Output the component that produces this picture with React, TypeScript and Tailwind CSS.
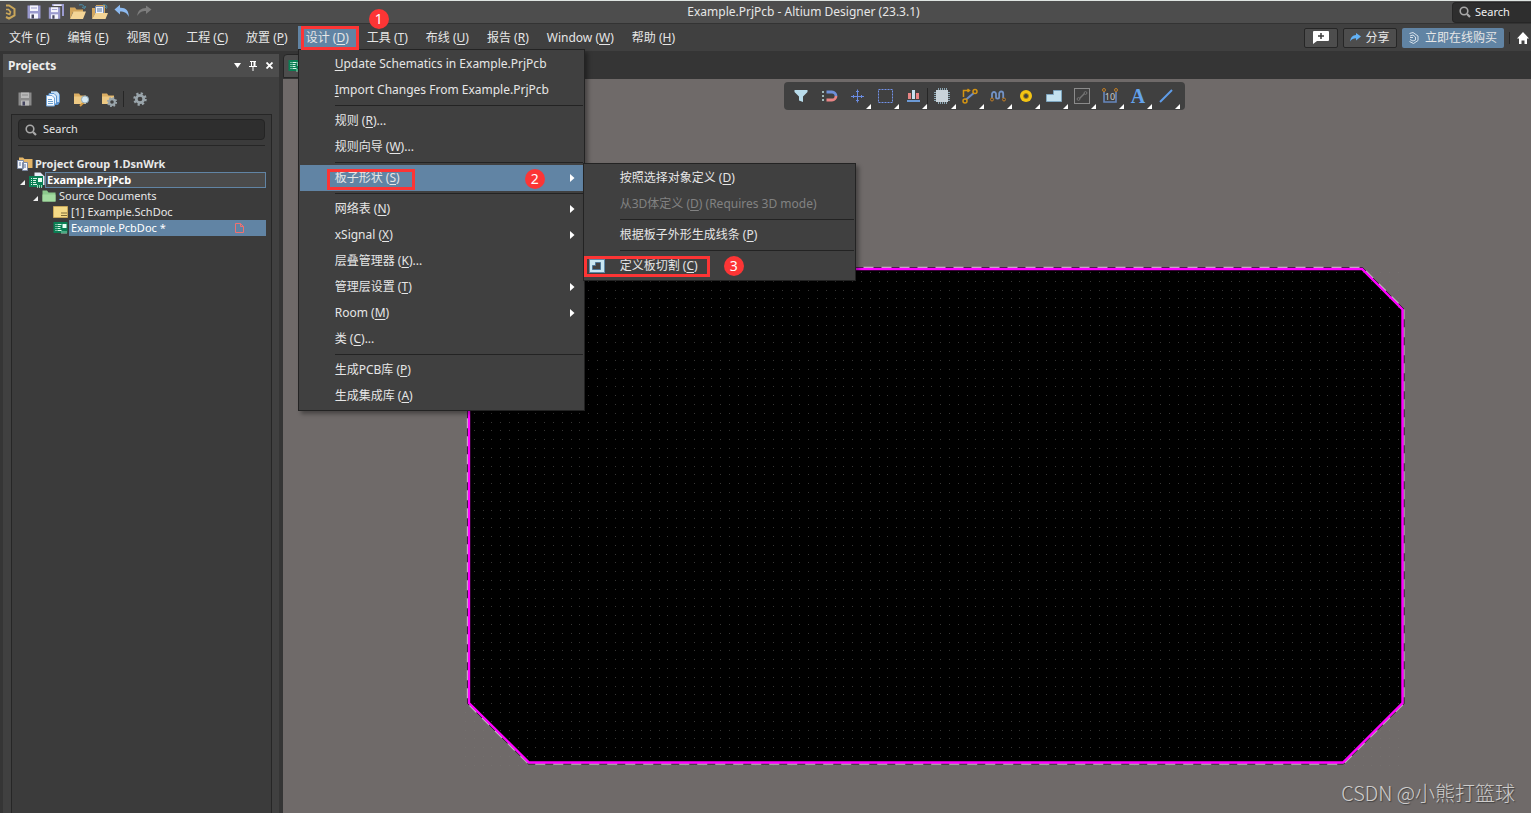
import React from 'react';
import clsx from 'clsx';

interface MenuEntry {
  label?: string;
  arrow?: boolean;
  disabled?: boolean;
  separator?: boolean;
  active?: boolean;
  mark?: string;
  icon?: React.ReactNode;
  submenu?: MenuEntry[];
}

const boardCutoutIcon = (
  <svg width="16" height="14" viewBox="0 0 16 14">
    <rect width="16" height="14" fill="#5f88a8" />
    <rect x="1" y="1" width="14" height="12" fill="#c9e6f1" />
    <path d="M6.500 3.500h5v7h-8v-4h3z" fill="#404040" stroke="#4f7797" />
  </svg>
);

const topMenus = [
  '文件 (&F)', '编辑 (&E)', '视图 (&V)', '工程 (&C)', '放置 (&P)', '设计 (&D)',
  '工具 (&T)', '布线 (&U)', '报告 (&R)', 'Window (&W)', '帮助 (&H)',
];

const boardShapeMenu: MenuEntry[] = [
  { label: '按照选择对象定义 (&D)' },
  { label: '从3D体定义 (&D) (Requires 3D mode)', disabled: true },
  { separator: true },
  { label: '根据板子外形生成线条 (&P)' },
  { separator: true },
  { label: '定义板切割 (&C)', icon: boardCutoutIcon, mark: '3' },
];

const designMenu: MenuEntry[] = [
  { label: '&Update Schematics in Example.PrjPcb' },
  { label: '&Import Changes From Example.PrjPcb' },
  { separator: true },
  { label: '规则 (&R)...' },
  { label: '规则向导 (&W)...' },
  { separator: true },
  { label: '板子形状 (&S)', arrow: true, active: true, mark: '2', submenu: boardShapeMenu },
  { separator: true },
  { label: '网络表 (&N)', arrow: true },
  { label: 'xSignal (&X)', arrow: true },
  { label: '层叠管理器 (&K)...' },
  { label: '管理层设置 (&T)', arrow: true },
  { label: 'Room (&M)', arrow: true },
  { label: '类 (&C)...' },
  { separator: true },
  { label: '生成PCB库 (&P)' },
  { label: '生成集成库 (&A)' },
];

// The letter after "&" is the access key and gets underlined
const MenuLabel: React.FC<{ text: string }> = ({ text }) => {
  const at = text.indexOf('&');
  if (at < 0) return <>{text}</>;
  return (
    <>
      {text.slice(0, at)}
      <span className="underline underline-offset-2">{text[at + 1]}</span>
      {text.slice(at + 2)}
    </>
  );
};

const StepBadge: React.FC<{ n: string; className?: string }> = ({ n, className }) => (
  <span
    className={clsx(
      'absolute z-30 flex h-5 w-5 items-center justify-center rounded-full bg-[#fc3535] text-sm leading-5 text-white',
      className,
    )}
  >
    {n}
  </span>
);

const MenuPanel: React.FC<{ entries: MenuEntry[]; className?: string }> = ({ entries, className }) => (
  <ul className={clsx('absolute z-20 border border-[#232323] bg-[#404040] p-px shadow-[3px_3px_4px_rgba(0,0,0,0.35)]', className)}>
    {entries.map((entry, i) =>
      entry.separator ? (
        <li key={i} className="ml-[35px] h-[5px] pt-[2px]">
          <div className="h-px bg-[#232323]"></div>
        </li>
      ) : (
        <li key={i} className="relative">
          <button
            type="button"
            disabled={entry.disabled}
            className={clsx(
              'flex h-[26px] w-full items-center pr-2 text-left whitespace-nowrap',
              entry.active && 'bg-[#6184a4]',
              entry.disabled ? 'text-[#828282]' : 'text-[#e6e6e6]',
            )}
          >
            <span className="flex w-[35px] shrink-0 pl-1">{entry.icon}</span>
            <span className="flex-1">
              <MenuLabel text={entry.label ?? ''} />
            </span>
            {entry.arrow && (
              <svg width="5" height="8" viewBox="0 0 5 8">
                <path d="M0 0l4.500 4L0 8z" fill="#fff" />
              </svg>
            )}
          </button>
          {entry.mark === '2' && (
            <>
              <span className="absolute top-1 left-[27px] h-[21px] w-[88px] border-3 border-[#fc3535]"></span>
              <StepBadge n="2" className="top-1 left-[225px]" />
            </>
          )}
          {entry.mark === '3' && (
            <>
              <span className="absolute top-[3px] -left-px h-[21px] w-[126px] border-3 border-[#fc3535]"></span>
              <StepBadge n="3" className="top-[3px] left-[139px]" />
            </>
          )}
          {entry.submenu && <MenuPanel entries={entry.submenu} className="-top-[2px] left-full w-[273px]" />}
        </li>
      ),
    )}
  </ul>
);

const SearchIcon = () => (
  <svg width="12" height="12" viewBox="0 0 12 12" fill="none" stroke="#a8a8a8" className="shrink-0">
    <circle cx="5" cy="5" r="3.800" strokeWidth="1.600" />
    <path d="M8 8l3 3" strokeWidth="2.200" />
  </svg>
);

const Floppy: React.FC<{ body: string; inner: string }> = ({ body, inner }) => (
  <>
    <path d="M1.500 1.500h13v13h-13z" fill={body} />
    <rect x="4" y="1.500" width="8" height="5.500" fill={inner} />
    <rect x="5" y="3.500" width="6" height="1" fill={body} />
    <rect x="4" y="9.500" width="8" height="5" fill={inner} />
    <rect x="5.500" y="10.500" width="2.500" height="4" fill="#454560" />
  </>
);

const Folder = () => (
  <>
    <path d="M1 13V2.500h5l1.500 2H13V13z" fill="#dcae62" />
    <path d="M1 13V5.500h12V13z" fill="#edc983" />
  </>
);

const quickActions: { name: string; icon: React.ReactNode }[] = [
  { name: 'Save', icon: <Floppy body="#9a9ace" inner="#f4f4fb" /> },
  {
    name: 'Save All',
    icon: (
      <>
        <path d="M4 0h12v12h-2V2H4z" fill="#9a9ace" />
        <path d="M5.500 0.500h8v1.500h-8z" fill="#f4f4fb" />
        <g transform="translate(-.5 2) scale(.88)"><Floppy body="#9a9ace" inner="#f4f4fb" /></g>
      </>
    ),
  },
  {
    name: 'Open',
    icon: (
      <>
        <path d="M0 15V3.500h5L6.500 5.500H13V8H3z" fill="#d3a65c" />
        <path d="M3.500 7.500H16l-3 7.500H0z" fill="#f4d596" />
        <path d="M9 1c3-.8 5 0 5.500 2.500M12 3l2.500 1.500L16 2" stroke="#4b91ad" fill="none" />
      </>
    ),
  },
  {
    name: 'Open Project',
    icon: (
      <>
        <path d="M0 15V4h4V1h9v9H3z" fill="#d3a65c" />
        <path d="M3.500 2.500h8v8h-8z" fill="#eef3fa" stroke="#7891bd" />
        <path d="M5 5h5M5 7h5" stroke="#53719f" />
        <path d="M3.500 9H16l-2.500 6H0z" fill="#f4d596" />
        <path d="M11 1c2-.8 4 .2 4 2.500M13 3l2 1.500" stroke="#4b91ad" fill="none" />
      </>
    ),
  },
  {
    name: 'Undo',
    icon: <path d="M.5 5.500L6 .8v3c5.500-.3 9 2.700 8.800 9.200C13.300 9 10.500 7.500 6 7.500v3z" fill="#8dbaf0" />,
  },
  {
    name: 'Redo',
    icon: <path d="M15.500 5.500L10 1.500v2.600c-5 .2-8.300 2.500-8.800 7.900C3.500 8.300 6 7 10 7v3z" fill="#7d7d7d" />,
  },
];

const Gear: React.FC<{ cx: number; cy: number; r: number; fill: string; hole: string }> = ({ cx, cy, r, fill, hole }) => (
  <>
    <circle cx={cx} cy={cy} r={r} fill="none" stroke={fill} strokeWidth={r * 0.45} strokeDasharray={`${r * 0.393} ${r * 0.392}`} />
    <circle cx={cx} cy={cy} r={r * 0.68} fill={hole} stroke={fill} strokeWidth={r * 0.5} />
  </>
);

const panelActions: { name: string; icon: React.ReactNode }[] = [
  { name: 'Save', icon: <Floppy body="#8b8b8b" inner="#b9b9b9" /> },
  {
    name: 'Compile',
    icon: (
      <>
        <path d="M6 .5h6l3 3V11l-2 3H6z" fill="#5b94d0" />
        <path d="M6 .5h6l2 2V11H6z" fill="#c6def4" />
        <path d="M4 2.500h5l2.500 2.500v8H4z" fill="#e3effb" stroke="#5b94d0" />
        <path d="M1.500 4.500H7l2.500 2.500v8h-8z" fill="#f5faff" stroke="#6fa2d8" />
        <path d="M3 8.500h4M3 10.500h5M3 12.500h5" stroke="#6c9fce" />
      </>
    ),
  },
  {
    name: 'Explore',
    icon: (
      <>
        <Folder />
        <path d="M11 11l-4 4" stroke="#d49a43" strokeWidth="2" />
        <circle cx="12" cy="8.500" r="3.600" fill="#d5e8f2" stroke="#8fa9b8" />
      </>
    ),
  },
  {
    name: 'Project Options',
    icon: (
      <>
        <Folder />
        <Gear cx={11} cy={11} r={4.2} fill="#9aa5ab" hole="#404040" />
      </>
    ),
  },
];

const activeTools: { name: string; menu: boolean; icon: React.ReactNode }[] = [
  {
    name: 'Filter',
    menu: false,
    icon: <path d="M1.500 2h13v2L10 8.500V14l-4-1.500v-4L1.500 4z" fill="#b9dceb" />,
  },
  {
    name: 'Snap',
    menu: false,
    icon: (
      <>
        <path d="M5.500 4H11a4 4 0 0 1 4 4" fill="none" stroke="#6e8fd8" strokeWidth="2.800" />
        <path d="M15 8a4 4 0 0 1-4 4H5.500" fill="none" stroke="#e88484" strokeWidth="2.800" />
        <path d="M1 3h2v2H1zM1 7h2v2H1zM1 11h2v2H1z" fill="#9fb8b8" />
      </>
    ),
  },
  { name: 'Move', menu: true, icon: <path d="M8.500 1.500v13M2 8.500h13M7 3.500h3M7 12.500h3M4.500 7v3M12.500 7v3" stroke="#6a8be0" /> },
  { name: 'Select', menu: true, icon: <rect x="1.500" y="1.500" width="14" height="13" fill="none" stroke="#7292ea" strokeDasharray="2 1" /> },
  {
    name: 'Align',
    menu: true,
    icon: (
      <>
        <rect x="3" y="5" width="3" height="6" fill="#e88484" />
        <rect x="7" y="2" width="3" height="9" fill="#c5e2ef" />
        <rect x="11" y="5" width="3" height="6" fill="#e88484" />
        <rect x="2" y="12" width="13" height="2" fill="#6c9ad6" />
      </>
    ),
  },
  {
    name: 'Component',
    menu: true,
    icon: (
      <>
        <path d="M4.500 0v16M6.500 0v16M8.500 0v16M10.500 0v16M12.500 0v16M0 4.500h16M0 6.500h16M0 8.500h16M0 10.500h16M0 12.500h16" stroke="#8ca6b3" />
        <rect x="2" y="2" width="12" height="12" fill="#c9d3d9" />
      </>
    ),
  },
  {
    name: 'Route',
    menu: true,
    icon: (
      <>
        <path d="M3.500 12L13 4" stroke="#6b8cc4" strokeWidth="2" />
        <path d="M1.500 9V2.500H7M5.500 1L7.500 2.500L5.500 4" fill="none" stroke="#d49412" strokeWidth="1.500" />
        <circle cx="13" cy="3.500" r="2" fill="#404040" stroke="#d49412" strokeWidth="1.500" />
        <circle cx="3" cy="13" r="2" fill="#404040" stroke="#d49412" strokeWidth="1.500" />
      </>
    ),
  },
  {
    name: 'Tune',
    menu: true,
    icon: (
      <>
        <path d="M2 10V6a2 2 0 0 1 4 0v3a1.600 1.600 0 0 0 3.200 0V5.500a2 2 0 0 1 4 0V10" fill="none" stroke="#7292c6" strokeWidth="1.800" />
        <circle cx="2" cy="11.500" r="1.500" fill="#404040" stroke="#c27e24" />
        <circle cx="14" cy="11.500" r="1.500" fill="#404040" stroke="#c27e24" />
      </>
    ),
  },
  {
    name: 'Via',
    menu: true,
    icon: (
      <>
        <circle cx="8" cy="8" r="6" fill="#f3c414" />
        <circle cx="8" cy="8" r="2.500" fill="#404040" stroke="#b08b12" />
      </>
    ),
  },
  { name: 'Polygon', menu: true, icon: <path d="M.5 13.500v-7h7v-4h8v11z" fill="#c4e2ef" stroke="#7ea6c0" /> },
  {
    name: 'Cutout',
    menu: true,
    icon: (
      <>
        <rect x=".5" y=".5" width="15" height="15" fill="none" stroke="#8a8a8a" />
        <path d="M4.500 11.500L11.500 4.500" stroke="#757575" strokeWidth="1.500" />
        <circle cx="4.500" cy="11" r="1.400" fill="#404040" stroke="#757575" />
        <circle cx="11.500" cy="5" r="1.400" fill="#404040" stroke="#757575" />
      </>
    ),
  },
  {
    name: 'Dimension',
    menu: true,
    icon: (
      <>
        <path d="M2 3.500V14h12V3.500" fill="none" stroke="#6687bd" strokeWidth="1.600" />
        <circle cx="2" cy="2" r="1.500" fill="#404040" stroke="#c27e24" />
        <circle cx="14" cy="2" r="1.500" fill="#404040" stroke="#c27e24" />
        <text x="8" y="11.500" fontSize="9" textAnchor="middle" fill="#c9c9c9">10</text>
      </>
    ),
  },
  {
    name: 'String',
    menu: true,
    icon: (
      <text x="8" y="15" fontSize="20" fontWeight="bold" fontFamily="Liberation Serif, serif" textAnchor="middle" fill="#64a3ec">A</text>
    ),
  },
  { name: 'Line', menu: true, icon: <path d="M2 14L14 2" stroke="#5f9ce8" strokeWidth="2" /> },
];

const PcbGlyph = () => (
  <>
    <rect y="1" width="14" height="11" fill="#0b7f54" />
    <path d="M2 3.500h1M2 5.500h1M2 7.500h1M2 9.500h1M4 3.500h4M4 5.500h3M4 7.500h3M4 9.500h4" stroke="#d7f5e6" />
    <rect x="9" y="3" width="4" height="4" fill="#e8fff4" />
    <path d="M8.500 10v3M10.500 10v3M12.500 10v3" stroke="#8fd6b4" />
  </>
);

const Expander = () => (
  <svg width="5" height="5" viewBox="0 0 5 5" className="mt-1 shrink-0">
    <path d="M5 0v5H0z" fill="#f0f0f0" />
  </svg>
);

const ProjectsPanel = () => (
  <aside className="flex w-[276px] shrink-0 flex-col bg-[#404040]">
    <header className="flex h-[23px] items-center bg-[#4d4d4d] pr-[2px] pl-[5px] text-[#eeeeee]">
      <h2 className="flex-1 text-xs font-bold">Projects</h2>
      <button type="button" aria-label="Panel menu" className="flex w-4 justify-center">
        <svg width="7" height="5" viewBox="0 0 7 5"><path d="M0 0h7L3.500 5z" fill="#fff" /></svg>
      </button>
      <button type="button" aria-label="Pin" className="flex w-4 justify-center">
        <svg width="8" height="10" viewBox="0 0 8 10" stroke="#fff" fill="none">
          <path d="M1 .5h6M2.500 .5v5M0 5.500h8M4 6v4" />
          <path d="M5.500 .5v5" strokeWidth="2" />
        </svg>
      </button>
      <button type="button" aria-label="Close" className="flex w-4 justify-center">
        <svg width="7" height="7" viewBox="0 0 7 7" stroke="#fff" strokeWidth="1.800"><path d="M.5 .5l6 6M6.500 .5l-6 6" /></svg>
      </button>
    </header>

    <div className="flex h-[37px] items-center pt-[6px] pl-2">
      {panelActions.map((action) => (
        <button key={action.name} type="button" aria-label={action.name} className="flex w-7 justify-center">
          <svg width="16" height="16" viewBox="0 0 16 16">{action.icon}</svg>
        </button>
      ))}
      <span className="h-4 w-px bg-[#262626]"></span>
      <button type="button" aria-label="Settings" className="flex w-8 justify-center">
        <svg width="16" height="16" viewBox="0 0 16 16"><Gear cx={8} cy={8} r={5.5} fill="#9aa5ab" hole="#404040" /></svg>
      </button>
    </div>

    <div className="mr-[7px] ml-2 flex-1 border border-b-0 border-[#262626] bg-[#3b3b3b] px-[6px] pt-1">
      <label className="flex h-[21px] items-center gap-[6px] rounded border border-[#242424] bg-[#2e2e2e] px-[6px]">
        <SearchIcon />
        <input type="text" placeholder="Search" aria-label="Search" className="w-full min-w-0 bg-transparent text-[11px] text-white outline-none placeholder:text-[#e6e6e6]" />
      </label>
      <div className="mt-[5px] h-px bg-[#262626]"></div>

      <ul className="mt-[10px] -mr-px -ml-px text-[11px] leading-4 text-[#e8e8e8]">
        <li className="flex h-4 items-center gap-[2px] font-bold">
          <svg width="16" height="16" viewBox="0 0 16 16">
            <path d="M2 12V1.500h4l1.500 1.500h8V12z" fill="#e3b568" />
            <path d="M.5 4.500h6v8h-6zM5.500 6.500h5v8h-5z" fill="#f3f6fb" stroke="#7f8ba5" />
            <path d="M2 7h2M2 9h2M7 9h2M7 11h2" stroke="#5b72a0" />
          </svg>
          Project Group 1.DsnWrk
        </li>
        <li className="flex h-4 items-center pl-[3px] font-bold text-white">
          <Expander />
          <svg width="16" height="16" viewBox="0 0 16 16" className="ml-1 shrink-0">
            <path d="M5.500 .5h6l4 4V13h-10z" fill="#e8ecf8" />
            <g transform="translate(0 3)"><PcbGlyph /></g>
          </svg>
          <span className="h-4 flex-1 border border-[#6184a4] bg-[#4b4b4b] pl-px leading-[14px]">Example.PrjPcb</span>
        </li>
        <li className="flex h-4 items-center pl-4">
          <Expander />
          <svg width="14" height="12" viewBox="0 0 14 12" className="mr-[3px] ml-1">
            <path d="M.5 11.500v-11h4.500l1.500 2h7v9z" fill="#8cc98c" />
            <path d="M.5 11.500v-7h13v7z" fill="#a3dba0" />
          </svg>
          Source Documents
        </li>
        <li className="flex h-4 items-center gap-[3px] pl-9">
          <svg width="15" height="12" viewBox="0 0 15 12">
            <path d="M.5 .5h14v11H.5z" fill="#f4da86" stroke="#c7a75a" />
            <path d="M8 7h6M8 9.500h6" stroke="#7d6a38" />
          </svg>
          [1] Example.SchDoc
        </li>
        <li className="flex h-4 items-center pl-9">
          <svg width="16" height="14" viewBox="0 0 15 14" className="shrink-0"><PcbGlyph /></svg>
          <span className="flex h-4 flex-1 items-center justify-between bg-[#6184a4] pr-[22px] pl-[2px] text-white">
            Example.PcbDoc *
            <svg width="9" height="10" viewBox="0 0 9 10"><path d="M.5 .5h5l3 3v6h-8zM5.500 .5v3h3" fill="none" stroke="#f07070" /></svg>
          </span>
        </li>
      </ul>
    </div>
  </aside>
);

const buildGrid = () => {
  let d = '';
  for (let row = 0; row <= 56; row++) {
    for (let col = 0; col <= 106; col++) {
      d += `M${Math.round(465 + col * 8.8)} ${Math.round(272 + row * 8.8)}h1v1h-1z`;
    }
  }
  return d;
};

const gridPath = buildGrid();

const BoardCanvas = () => (
  <svg viewBox="283 79 1248 734" preserveAspectRatio="xMinYMin slice" className="absolute inset-0 h-full w-full">
    <path d="M469 269H1362L1402.500 309.500V703L1343 762.500H529L469 703Z" fill="#000" />
    <path d={gridPath} fill="#7a7776" fillOpacity=".45" shapeRendering="crispEdges" />
    <path d="M467.500 267.500H1362.500L1404 309V703.500L1343.500 764H528.500L467.500 703.500Z" fill="none" stroke="#1c1c1c" />
    <path d="M467.500 267.500H1362.500L1404 309V703.500L1343.500 764H528.500L467.500 703.500Z" fill="none" stroke="#c4c4c4" strokeWidth="1.300" strokeDasharray="10 8" />
    <path d="M469 269H1362L1402.500 309.500V703L1343 762.500H529L469 703Z" fill="none" stroke="#f0f" strokeWidth="2.400" />
  </svg>
);

const App: React.FC = () => {
  return (
    <div className="flex h-screen flex-col overflow-hidden bg-[#353535] font-['Noto_Sans','Noto_Sans_CJK_SC',sans-serif] text-xs text-[#e6e6e6]">
      {/* Title bar */}
      <header className="flex h-6 shrink-0 items-center border-t border-b border-t-[#dfe5e2] border-b-[#333333] bg-[#4d4d4d]">
        <svg width="12" height="16" viewBox="0 0 12 16" className="mr-[6px] ml-[5px]" fill="none" stroke="#c9a65a" strokeWidth="2">
          <path d="M1 1.500h3L9.500 5v6.500L4 14.500 1 13" />
          <path d="M1 5.500h2.500l2 2.500-.8 2.500L1 9" strokeWidth="1.600" />
        </svg>
        {quickActions.map((action) => (
          <button key={action.name} type="button" aria-label={action.name} className="flex w-[22px] justify-center">
            <svg width="16" height="16" viewBox="0 0 16 16">{action.icon}</svg>
          </button>
        ))}
        <h1 className="flex-1 text-center">Example.PrjPcb - Altium Designer (23.3.1)</h1>
        <label className="flex h-[21px] w-[79px] items-center gap-1 rounded-l border border-r-0 border-[#262626] bg-[#2e2e2e] pl-[6px]">
          <SearchIcon />
          <input type="text" placeholder="Search" aria-label="Search" className="w-full min-w-0 bg-transparent text-[11px] text-white outline-none placeholder:text-[#f0f0f0]" />
        </label>
      </header>

      {/* Menu bar */}
      <nav className="flex h-[27px] shrink-0 items-center bg-[#404040] pl-px">
        <ul className="flex flex-1 items-center gap-[2px]">
          {topMenus.map((text) => {
            const open = text.startsWith('设计');
            return (
              <li key={text} className="relative">
                <button type="button" className={clsx('h-6 px-2 whitespace-nowrap', open && 'bg-[#6184a4]')}>
                  <MenuLabel text={text} />
                </button>
                {open && (
                  <>
                    <span className="absolute inset-y-0 -right-[2px] left-[3px] z-30 border-3 border-[#fc3535]"></span>
                    <StepBadge n="1" className="-top-[17px] left-[71px]" />
                    <MenuPanel entries={designMenu} className="top-[23px] left-0 w-[287px]" />
                  </>
                )}
              </li>
            );
          })}
        </ul>
        <div className="flex items-center gap-[5px]">
          <button type="button" aria-label="Comment" className="flex h-5 w-[34px] items-center justify-center rounded-xs border border-[#262626] bg-[#4d4d4d]">
            <svg width="16" height="13" viewBox="0 0 16 13">
              <path d="M1 0h14a1 1 0 0 1 1 1v8a1 1 0 0 1-1 1H4l-4 3V1a1 1 0 0 1 1-1z" fill="#fff" />
              <path d="M8 2v6M5 5h6" stroke="#3c3c3c" strokeWidth="1.500" />
            </svg>
          </button>
          <button type="button" className="flex h-5 w-[54px] items-center justify-center gap-1 rounded-xs border border-[#262626] bg-[#4d4d4d]">
            <svg width="11" height="9" viewBox="0 0 11 9"><path d="M11 3.500L6 0v2C2.500 2.300 .5 4.500 0 8.500 1.500 6 3.500 5.200 6 5.200V7.500z" fill="#62b1f5" /></svg>
            分享
          </button>
          <button type="button" className="flex h-5 w-[102px] items-center justify-center gap-[6px] rounded-xs bg-[#6184a4]">
            <svg width="10" height="12" viewBox="0 0 10 12" fill="none" stroke="#d7e1ea">
              <path d="M.5 1.500L4 .5l5 3.500v4.500L4.500 11.500.5 9.500M1 4l3-1 2.500 2v3l-2.500 1L1 7.500M1 5.500h3" />
            </svg>
            立即在线购买
          </button>
          <span className="h-3 w-px bg-[#262626]"></span>
          <button type="button" aria-label="Home" className="w-4 overflow-hidden">
            <svg width="12" height="12" viewBox="0 0 12 12" className="ml-[2px]">
              <path d="M6 0l6 6.500h-2V12H7.500V8.500h-3V12H2V6.500H0z" fill="#fff" />
            </svg>
          </button>
        </div>
      </nav>

      <div className="flex min-h-0 flex-1 gap-1 pt-[3px] pl-[3px]">
        <ProjectsPanel />

        {/* Document area */}
        <main className="flex min-w-0 flex-1 flex-col">
          <div className="flex h-[25px] shrink-0">
            <button type="button" aria-label="Example.PcbDoc" className="flex h-6 w-40 items-center rounded-t border border-[#262626] bg-[#4d4d4d] pl-1">
              <svg width="16" height="14" viewBox="0 0 15 14"><PcbGlyph /></svg>
            </button>
          </div>
          <div className="relative flex-1 overflow-hidden bg-[#6f6a69]">
            <BoardCanvas />
            <div className="absolute top-[3px] left-[501px] flex h-7 items-stretch rounded-sm bg-[#404040] pr-[5px] pl-[3px]">
              {activeTools.map((tool, i) => (
                <React.Fragment key={tool.name}>
                  {i === 5 && <span className="my-[6px] w-px bg-[#262626]"></span>}
                  <button type="button" aria-label={tool.name} className="relative flex w-7 items-center justify-center">
                    <svg width="16" height="16" viewBox="0 0 16 16" className="overflow-visible">{tool.icon}</svg>
                    {tool.menu && (
                      <svg width="5" height="5" viewBox="0 0 5 5" className="absolute right-0 bottom-px">
                        <path d="M5 0v5H0z" fill="#fff" />
                      </svg>
                    )}
                  </button>
                </React.Fragment>
              ))}
            </div>
            <p className="absolute right-4 bottom-1 font-['Noto_Sans_CJK_SC',sans-serif] text-xl leading-8 font-light text-[#cfcdcc] [text-shadow:1px_1px_1px_#444]">
              CSDN @小熊打篮球
            </p>
          </div>
        </main>
      </div>
    </div>
  );
};

export default App;
